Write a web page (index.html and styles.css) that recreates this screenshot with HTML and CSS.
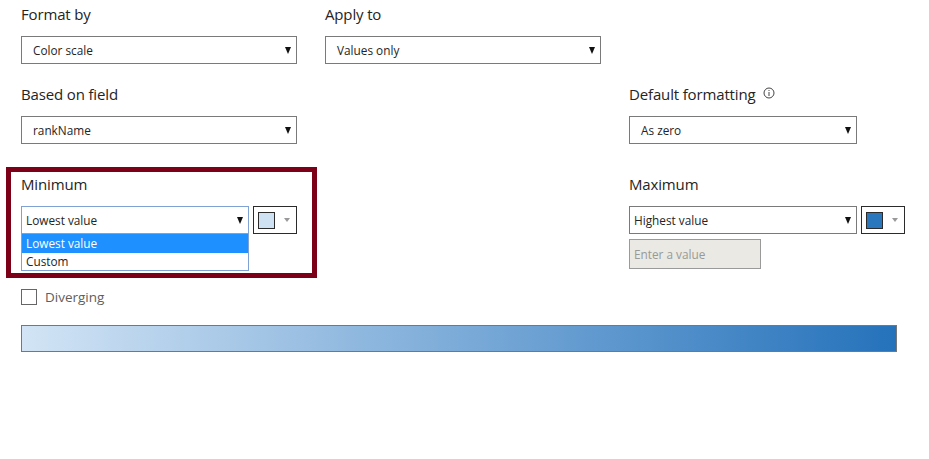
FILE: index.html
```html
<!DOCTYPE html>
<html>
<head>
<meta charset="utf-8">
<link rel="stylesheet" href="styles.css">
</head>
<body>
<div class="page">
  <div class="grid">
    <div class="field c1">
      <div class="label">Format by</div>
      <div class="select wide"><span class="val pad">Color scale</span><span class="arrow"></span></div>
    </div>
    <div class="field c2">
      <div class="label">Apply to</div>
      <div class="select wide"><span class="val pad">Values only</span><span class="arrow"></span></div>
    </div>
    <div class="field c1 r2">
      <div class="label">Based on field</div>
      <div class="select wide"><span class="val pad">rankName</span><span class="arrow"></span></div>
    </div>
    <div class="field c3 r2">
      <div class="label">Default formatting
        <svg class="info" width="12" height="12" viewBox="0 0 12 12"><circle cx="6" cy="6" r="5" fill="none" stroke="#444" stroke-width="1"/><rect x="5.5" y="5" width="1" height="4" fill="#444"/><rect x="5.5" y="3" width="1" height="1" fill="#444"/></svg>
      </div>
      <div class="select mid"><span class="val pad">As zero</span><span class="arrow"></span></div>
    </div>
    <div class="highlight c1 r3">
      <div class="label">Minimum</div>
      <div class="pickrow">
        <div class="dropwrap">
          <div class="select mid focus"><span class="val">Lowest value</span><span class="arrow"></span></div>
          <div class="list">
            <div class="opt sel">Lowest value</div>
            <div class="opt">Custom</div>
          </div>
        </div>
        <div class="color gap4"><span class="swatch light"></span><span class="carrow"></span></div>
      </div>
    </div>
    <div class="field c3 r3 maxcol">
      <div class="label">Maximum</div>
      <div class="pickrow">
        <div class="select mid"><span class="val">Highest value</span><span class="arrow"></span></div>
        <div class="color gap4"><span class="swatch dark"></span><span class="carrow"></span></div>
      </div>
      <div class="input">Enter a value</div>
    </div>
  </div>
  <div class="check"><span class="box"></span><span class="ctext">Diverging</span></div>
  <div class="bar"></div>
</div>
</body>
</html>
```
FILE: styles.css
```css
html, body {
  margin: 0;
  padding: 0;
  background: #fff;
}
body {
  font-family: "Open Sans", "Noto Sans", sans-serif;
  color: #252423;
}
.page {
  padding: 4px 0 0 21px;
}
.grid {
  display: grid;
  grid-template-columns: 304px 304px auto;
  grid-template-rows: auto auto auto;
}
.c1 { grid-column: 1; }
.c2 { grid-column: 2; }
.c3 { grid-column: 3; }
.r2 { grid-row: 2; margin-top: 20px; }
.r3 { grid-row: 3; }
.label {
  font-size: 15px;
  line-height: 20px;
  height: 20px;
  letter-spacing: -0.15px;
  display: flex;
  align-items: center;
}
.info {
  margin-left: 8px;
  margin-top: -2px;
}
.select {
  box-sizing: border-box;
  height: 28px;
  margin-top: 12px;
  border: 1px solid #7a7a7a;
  display: flex;
  align-items: center;
  justify-content: space-between;
  font-size: 11.8px;
  background: #fff;
}
.select.wide { width: 276px; }
.select.mid { width: 228px; }
.select.focus { border-color: #7fa1d3; }
.val {
  padding-left: 4px;
}
.val.pad { padding-left: 11px; }
.arrow {
  width: 0;
  height: 0;
  border-left: 3.5px solid transparent;
  border-right: 3.5px solid transparent;
  border-top: 7px solid #111;
  margin-right: 5px;
}
.highlight {
  margin-left: -15px;
  margin-top: 23px;
  width: 311px;
  box-sizing: border-box;
  border: 5px solid #7d0019;
  padding: 2px 0 2px 10px;
}
.maxcol {
  margin-top: 30px;
}
.pickrow {
  display: flex;
  align-items: flex-start;
}
.dropwrap {
  display: flex;
  flex-direction: column;
}
.list {
  box-sizing: border-box;
  width: 228px;
  border: 1px solid #7fa1d3;
  border-top: none;
  font-size: 11.8px;
}
.opt {
  height: 17px;
  line-height: 17px;
  padding-left: 4px;
}
.opt.sel {
  background: #1e90ff;
  color: #fff;
  height: 19px;
  line-height: 19px;
}
.color {
  box-sizing: border-box;
  margin-top: 12px;
  width: 44px;
  height: 28px;
  border: 1px solid #2b2b2b;
  display: flex;
  align-items: center;
  padding-left: 4px;
}
.gap4 { margin-left: 4px; }
.swatch {
  box-sizing: border-box;
  width: 17px;
  height: 17px;
  border: 1px solid #2b2b2b;
}
.swatch.light { background: #cfe2f3; }
.swatch.dark { background: #2a77bd; }
.carrow {
  width: 0;
  height: 0;
  border-left: 3.5px solid transparent;
  border-right: 3.5px solid transparent;
  border-top: 4px solid #999;
  margin-left: 9px;
}
.input {
  box-sizing: border-box;
  margin-top: 5px;
  width: 132px;
  height: 30px;
  background: #eae9e3;
  border: 1px solid #9a9a9a;
  color: #999;
  font-size: 11.8px;
  padding-left: 4px;
  display: flex;
  align-items: center;
}
.check {
  display: flex;
  align-items: center;
  margin-top: 11px;
  height: 16px;
}
.box {
  box-sizing: border-box;
  width: 16px;
  height: 16px;
  border: 1px solid #666;
}
.ctext {
  margin-left: 8px;
  font-size: 13.5px;
  color: #605e5c;
}
.bar {
  box-sizing: border-box;
  margin-top: 20px;
  width: 876px;
  height: 27px;
  border: 1px solid #777;
  background: linear-gradient(to right, #d2e4f5, #2572bb);
}
```
